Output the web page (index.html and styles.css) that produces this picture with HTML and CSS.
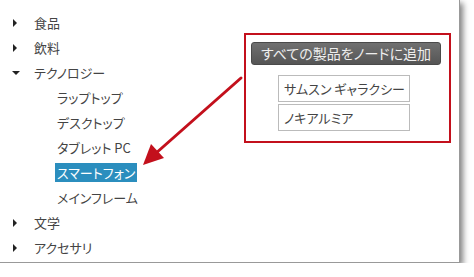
FILE: index.html
```html
<!DOCTYPE html>
<html lang="ja">
<head>
<meta charset="utf-8">
<link rel="stylesheet" href="styles.css">
</head>
<body>
<div class="panel">
  <ul class="tree">
    <li class="row"><span class="tri right"></span><span class="label">食品</span></li>
    <li class="row"><span class="tri right"></span><span class="label">飲料</span></li>
    <li class="row"><span class="tri down"></span><span class="label">テクノロジー</span></li>
    <li class="row child"><span class="label">ラップトップ</span></li>
    <li class="row child"><span class="label">デスクトップ</span></li>
    <li class="row child"><span class="label">タブレット PC</span></li>
    <li class="row child"><span class="label selected">スマートフォン</span></li>
    <li class="row child"><span class="label">メインフレーム</span></li>
    <li class="row"><span class="tri right"></span><span class="label">文学</span></li>
    <li class="row"><span class="tri right"></span><span class="label">アクセサリ</span></li>
  </ul>
  <div class="callout">
    <button class="btn">すべての製品をノードに追加</button>
    <div class="inputs">
      <div class="field">サムスン ギャラクシー</div>
      <div class="field">ノキアルミア</div>
    </div>
  </div>
  <svg class="arrow" width="110" height="95" viewBox="0 0 110 95">
    <line x1="104" y1="4" x2="18" y2="80" stroke="#c3101c" stroke-width="3" stroke-linecap="round"/>
    <polygon points="6,91 14,70 27,84" fill="#c3101c"/>
  </svg>
</div>
</body>
</html>
```
FILE: styles.css
```css
html, body {
  margin: 0;
  padding: 0;
  background: #fff;
}
body {
  font-family: "Noto Sans CJK JP", "Noto Sans", sans-serif;
  font-feature-settings: "palt";
  color: #444;
  font-size: 13px;
}
.panel {
  position: relative;
  width: 459px;
  height: 262px;
  background: #fff;
  border-right: 1px solid #999;
  border-bottom: 1px solid #999;
  box-shadow: 3px 3px 6px rgba(0, 0, 0, 0.5);
  display: flex;
  align-items: flex-start;
}
.tree {
  list-style: none;
  margin: 0;
  padding: 10px 0 0 0;
  width: 244px;
  flex: none;
}
.row {
  height: 25px;
  display: flex;
  align-items: center;
  padding-left: 12px;
}
.row.child {
  padding-left: 55px;
}
.tri {
  width: 8px;
  height: 8px;
  margin-right: 12px;
  position: relative;
  flex: none;
}
.tri.right::before {
  content: "";
  position: absolute;
  left: 1px;
  top: 0;
  border-left: 4px solid #222;
  border-top: 4px solid transparent;
  border-bottom: 4px solid transparent;
}
.tri.down::before {
  content: "";
  position: absolute;
  left: 0;
  top: 2px;
  border-top: 4px solid #222;
  border-left: 4px solid transparent;
  border-right: 4px solid transparent;
}
.label {
  line-height: 19px;
  padding: 0 2px;
  white-space: nowrap;
}
.label.selected {
  background: #2b8ebe;
  color: #fff;
}
.callout {
  margin-top: 33px;
  width: 198px;
  height: 99px;
  border: 2px solid #c3101c;
  padding: 7px 0 0 5px;
  box-sizing: content-box;
  display: flex;
  flex-direction: column;
  align-items: flex-start;
}
.btn {
  width: 190px;
  height: 23px;
  border: 1px solid #4a4a4a;
  border-radius: 3px;
  background: linear-gradient(#707070, #555);
  color: #eee;
  font-family: inherit;
  font-feature-settings: "palt";
  font-size: 14px;
  padding: 0;
  line-height: 21px;
}
.inputs {
  margin-top: 10px;
  margin-left: 27px;
  display: flex;
  flex-direction: column;
  gap: 2px;
}
.field {
  width: 125px;
  height: 25px;
  border: 1px solid #bbb;
  padding-left: 5px;
  line-height: 25px;
  font-size: 13px;
  white-space: nowrap;
}
.arrow {
  position: absolute;
  left: 137px;
  top: 74px;
}
```
